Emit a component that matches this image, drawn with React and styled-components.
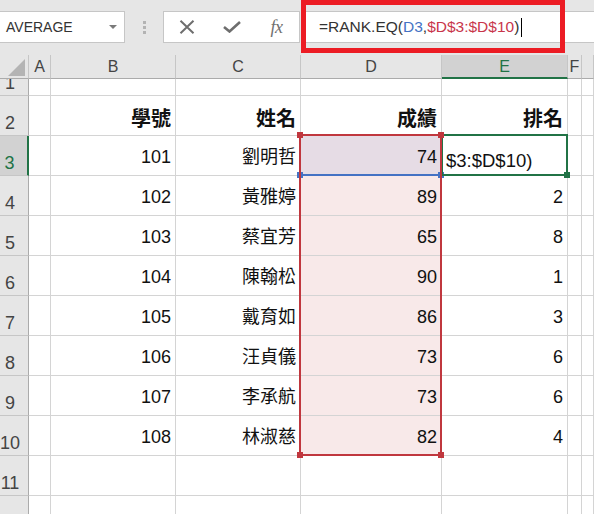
import React from 'react'
import styled, { createGlobalStyle, css } from 'styled-components'

const GlobalStyle = createGlobalStyle`
  html, body {
    margin: 0;
    padding: 0;
    overflow: hidden;
    background: #ffffff;
  }
  body {
    font-family: "Liberation Sans", "Noto Sans CJK TC", sans-serif;
  }
`

const GREEN = '#217346'
const RED = '#c0373e'
const BLUE = '#4472c4'
const GRID = '#d4d4d4'

const Page = styled.div`
  width: 594px;
  height: 514px;
  overflow: hidden;
  background: #fff;
`

const Toolbar = styled.div`
  height: 55px;
  box-sizing: border-box;
  padding-top: 11px;
  background: #e6e6e6;
  display: flex;
  align-items: flex-start;
`

const NameBox = styled.div`
  width: 126px;
  height: 32px;
  margin-left: -1px;
  box-sizing: border-box;
  border: 1px solid #c6c6c6;
  background: #fff;
  display: flex;
  align-items: center;
  justify-content: space-between;
  padding: 0 7px 0 6px;
  font-size: 14px;
  color: #333;
`

const Caret = styled.span`
  width: 0;
  height: 0;
  border-left: 4px solid transparent;
  border-right: 4px solid transparent;
  border-top: 4px solid #7a7a7a;
`

const Grip = styled.div`
  width: 38px;
  height: 32px;
  display: flex;
  flex-direction: column;
  align-items: center;
  justify-content: center;
  gap: 2px;

  i {
    width: 3px;
    height: 3px;
    background: #b3b3b3;
  }
`

const FuncBox = styled.div`
  width: 137px;
  height: 32px;
  box-sizing: border-box;
  border: 1px solid #c6c6c6;
  background: #fff;
  display: flex;
  align-items: center;
`

const FuncSlot = styled.div`
  width: 45px;
  height: 100%;
  display: flex;
  align-items: center;
  justify-content: center;
  color: #6e6e6e;
`

const Fx = styled.span`
  font-family: "Liberation Serif", "DejaVu Serif", serif;
  font-style: italic;
  font-size: 18px;
  color: #707070;
  letter-spacing: -0.5px;
`

const FormulaBox = styled.div`
  position: relative;
  flex: 1;
  height: 32px;
  margin-left: 1px;
  margin-right: -1px;
  box-sizing: border-box;
  border: 1px solid #c6c6c6;
  background: #fff;
  display: flex;
  align-items: center;
  padding-left: 17px;
  font-size: 15.5px;
  color: #333;
  white-space: nowrap;
`

const Ref = styled.span`
  color: ${(p) => p.$color};
`

const Cursor = styled.span`
  display: inline-block;
  width: 1px;
  height: 19px;
  margin-left: 2px;
  background: #000;
  vertical-align: middle;
`

const Annotation = styled.div`
  position: absolute;
  left: -1px;
  top: -12px;
  width: 264px;
  height: 53px;
  box-sizing: border-box;
  border: 5px solid #ec1c24;
  pointer-events: none;
`

const Sheet = styled.div`
  display: grid;
  grid-template-columns: 29px 22px 125px 125px 141px 126px 14px 1fr;
  grid-template-rows: 24px 17px repeat(11, 40px);
  font-family: "Liberation Sans", "Noto Sans CJK TC", sans-serif;
`

const Corner = styled.div`
  background: #e6e6e6;
  border-right: 1px solid #c6c6c6;
  border-bottom: 1px solid #ababab;
  box-sizing: border-box;
  display: flex;
  align-items: flex-end;
  justify-content: flex-end;
  padding: 0 3px 2px 0;
`

const ColHead = styled.div`
  box-sizing: border-box;
  background: ${(p) => (p.$active ? '#d2d2d2' : '#e6e6e6')};
  border-right: 1px solid #c6c6c6;
  border-bottom: ${(p) => (p.$active ? `2px solid ${GREEN}` : '1px solid #ababab')};
  display: flex;
  align-items: center;
  justify-content: center;
  padding-top: 1px;
  font-size: 16px;
  color: ${(p) => (p.$active ? GREEN : '#444')};
`

const RowHead = styled.div`
  box-sizing: border-box;
  background: ${(p) => (p.$active ? '#d2d2d2' : '#e6e6e6')};
  border-right: ${(p) => (p.$active ? `2px solid ${GREEN}` : '1px solid #ababab')};
  border-bottom: 1px solid #c6c6c6;
  display: flex;
  align-items: flex-end;
  justify-content: center;
  padding: 0 8px 3px 0;
  overflow: hidden;
  font-size: 18px;
  line-height: 1;
  color: ${(p) => (p.$active ? GREEN : '#444')};
`

const Cell = styled.div`
  position: relative;
  box-sizing: border-box;
  border-right: 1px solid ${GRID};
  border-bottom: 1px solid ${GRID};
  background: ${(p) => p.$fill || '#fff'};
  display: flex;
  align-items: flex-end;
  justify-content: ${(p) => (p.$left ? 'flex-start' : 'flex-end')};
  padding: 0 4px 9px 4px;
  font-size: 18px;
  line-height: 1;
  color: #111;
  white-space: nowrap;
  ${(p) =>
    p.$head &&
    css`
      font-size: 20px;
      font-weight: bold;
      padding-bottom: 6px;
    `}
  ${(p) =>
    p.$edit &&
    css`
      font-size: 18.5px;
      padding-left: 4px;
      padding-bottom: 5px;
    `}
`

/* selection / reference outlines drawn over the cells */
const Range = styled.div`
  position: absolute;
  left: ${(p) => p.$left}px;
  top: -2px;
  width: ${(p) => p.$w}px;
  height: ${(p) => p.$h}px;
  box-sizing: border-box;
  z-index: ${(p) => p.$z};
  border: 2px solid ${(p) => p.$color};
  pointer-events: none;
`

const Handle = styled.span`
  position: absolute;
  width: 6px;
  height: 6px;
  background: ${(p) => p.$color};
  ${(p) => (p.$top ? 'top: -4px;' : 'bottom: -4px;')}
  ${(p) => (p.$right ? 'right: -4px;' : 'left: -4px;')}
`

const Tri = () => (
  <svg width="17" height="17" viewBox="0 0 17 17">
    <polygon points="17,0 17,17 0,17" fill="#b4b4b4" />
  </svg>
)

const XIcon = () => (
  <svg width="16" height="14" viewBox="0 0 16 14">
    <path d="M1.5 0.8 L14.5 13.2 M14.5 0.8 L1.5 13.2" stroke="#6e6e6e" strokeWidth="2" fill="none" />
  </svg>
)

const CheckIcon = () => (
  <svg width="18" height="12" viewBox="0 0 18 12">
    <path d="M1 6 L6.5 10.5 L17 1" stroke="#6e6e6e" strokeWidth="2.6" fill="none" />
  </svg>
)

const columns = ['A', 'B', 'C', 'D', 'E', 'F', '']

const rows = [
  ['101', '劉明哲', '74', null],
  ['102', '黃雅婷', '89', '2'],
  ['103', '蔡宜芳', '65', '8'],
  ['104', '陳翰松', '90', '1'],
  ['105', '戴育如', '86', '3'],
  ['106', '汪貞儀', '73', '6'],
  ['107', '李承航', '73', '6'],
  ['108', '林淑慈', '82', '4'],
]

const blankRow = (key) => (
  <React.Fragment key={key}>
    <Cell />
    <Cell />
    <Cell />
    <Cell />
    <Cell />
    <Cell />
    <Cell />
  </React.Fragment>
)

const App = () => {
  return (
    <Page>
      <GlobalStyle />
      <Toolbar>
        <NameBox>
          AVERAGE
          <Caret />
        </NameBox>
        <Grip>
          <i />
          <i />
          <i />
        </Grip>
        <FuncBox>
          <FuncSlot>
            <XIcon />
          </FuncSlot>
          <FuncSlot>
            <CheckIcon />
          </FuncSlot>
          <FuncSlot>
            <Fx>fx</Fx>
          </FuncSlot>
        </FuncBox>
        <FormulaBox>
          =RANK.EQ(
          <Ref $color={BLUE}>D3</Ref>,<Ref $color="#c8354a">$D$3:$D$10</Ref>)
          <Cursor />
          <Annotation />
        </FormulaBox>
      </Toolbar>

      <Sheet>
        <Corner>
          <Tri />
        </Corner>
        {columns.map((c) => (
          <ColHead key={c || 'g'} $active={c === 'E'}>
            {c}
          </ColHead>
        ))}

        <RowHead>1</RowHead>
        {blankRow('r1')}

        <RowHead>2</RowHead>
        <Cell />
        <Cell $head>學號</Cell>
        <Cell $head>姓名</Cell>
        <Cell $head>成績</Cell>
        <Cell $head>排名</Cell>
        <Cell />
        <Cell />

        {rows.map(([id, name, score, rank], i) => (
          <React.Fragment key={id}>
            <RowHead $active={i === 0}>{i + 3}</RowHead>
            <Cell />
            <Cell>{id}</Cell>
            <Cell>{name}</Cell>
            <Cell $fill={i === 0 ? '#e6dce5' : '#f8e9e9'}>
              {score}
              {i === 0 && (
                <>
                  <Range $left={-2} $w={143} $h={42} $z={2} $color={BLUE}>
                    <Handle $color={BLUE} />
                    <Handle $color={BLUE} $right />
                  </Range>
                  <Range $left={-2} $w={143} $h={322} $z={4} $color={RED}>
                    <Handle $color={RED} $top />
                    <Handle $color={RED} $top $right />
                    <Handle $color={RED} />
                    <Handle $color={RED} $right />
                  </Range>
                </>
              )}
            </Cell>
            {rank === null ? (
              <Cell $left $edit>
                $3:$D$10)
                <Range $left={-1} $w={127} $h={42} $z={3} $color={GREEN}>
                  <Handle $color={GREEN} $right />
                </Range>
              </Cell>
            ) : (
              <Cell>{rank}</Cell>
            )}
            <Cell />
            <Cell />
          </React.Fragment>
        ))}

        <RowHead>11</RowHead>
        {blankRow('r11')}
        <RowHead>12</RowHead>
        {blankRow('r12')}
      </Sheet>
    </Page>
  )
}

export default App
